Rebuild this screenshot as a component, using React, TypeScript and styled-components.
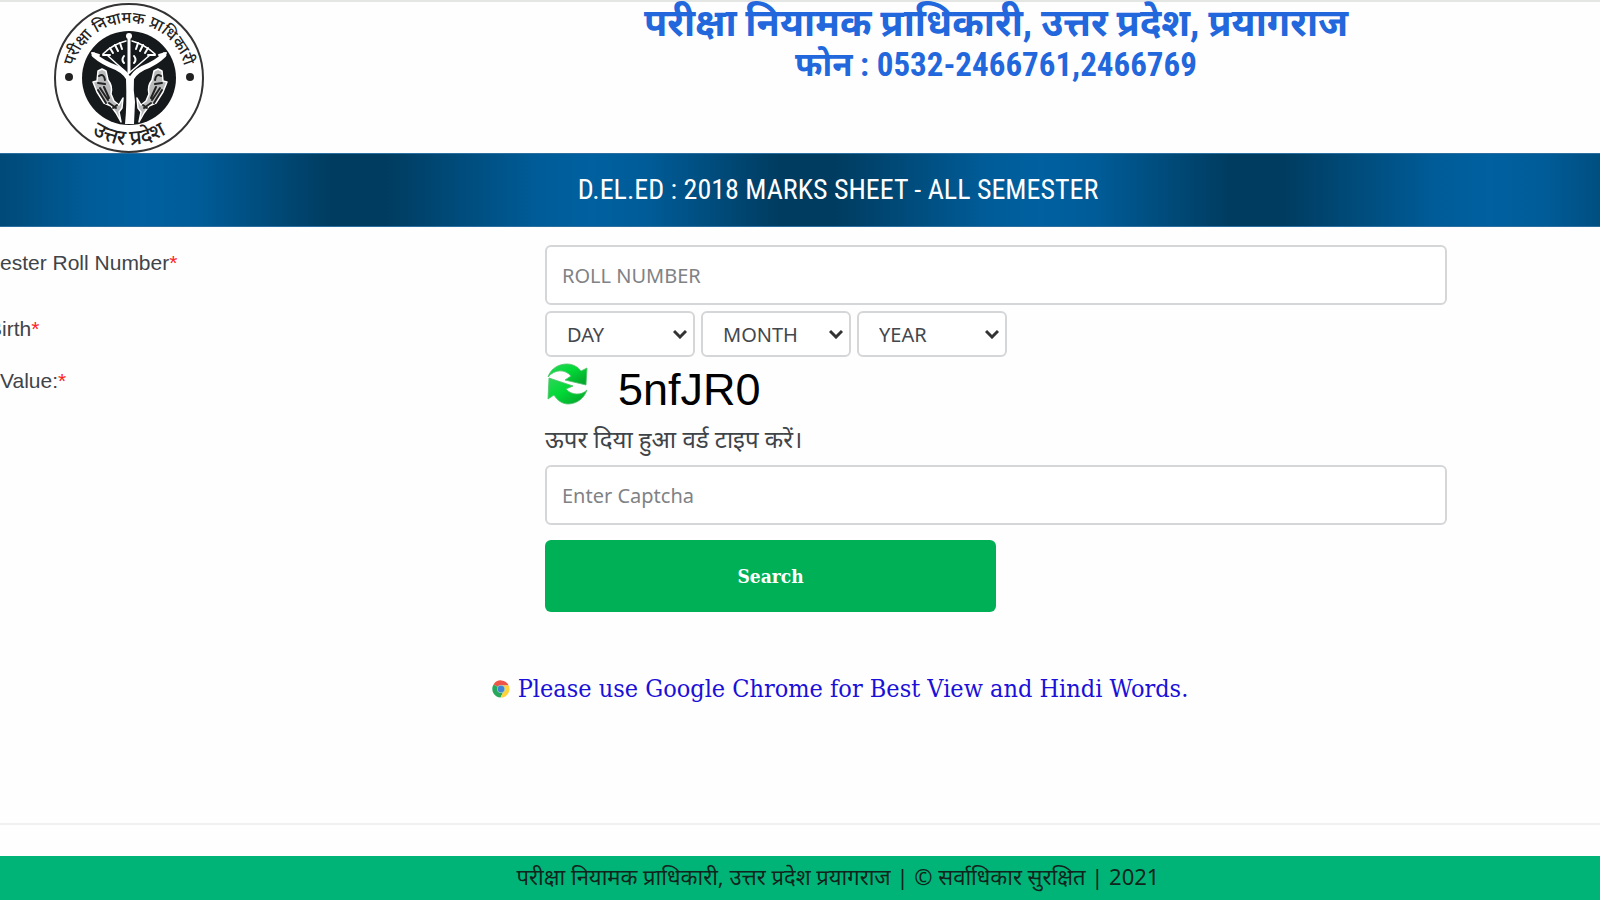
import React from "react";
import styled, { createGlobalStyle } from "styled-components";

const GlobalStyle = createGlobalStyle`
  * { box-sizing: border-box; }
  body {
    margin: 0;
    background: #fefefe;
    color: #3f4449;
    font-family: "Liberation Sans", Arial, sans-serif;
    overflow-x: hidden;
  }
`;

const columns = "545px minmax(0, 1fr) 153px";
const condensed = `"Roboto Condensed", Roboto, "Noto Sans", sans-serif`;

const Page = styled.div`
  min-height: 100vh;
  display: flex;
  flex-direction: column;
`;

const Header = styled.header`
  display: grid;
  grid-template-columns: ${columns};
  height: 153px;
  border-top: 2px solid #e4e6e4;
`;

const LogoCell = styled.div`
  padding-left: 53px;
`;

const Emblem = styled.svg`
  display: block;
  width: 152px;
  height: 152px;
`;

const Authority = styled.h1`
  margin: 0;
  color: #2267dc;
  font-family: ${condensed};
  font-size: 38px;
  font-weight: 700;
  line-height: 42px;
  text-align: center;
  white-space: nowrap;
`;

const Phone = styled.span`
  display: block;
  font-size: 33px;
`;

const Banner = styled.h2`
  display: flex;
  align-items: center;
  justify-content: center;
  height: 74px;
  margin: 0;
  padding-left: 76px;
  border: solid #2a6f9f;
  border-width: 1px 0;
  color: #fff;
  background: linear-gradient(90deg, #0060a0 0, #005c98 12%, #003c60 42%, #003c60 54%, #005c98 88%, #0060a0 100%) 143px 0 / 449px 100% repeat-x;
  font-family: ${condensed};
  font-size: 28px;
  font-weight: 400;
  line-height: 40px;
`;

const Form = styled.form`
  display: grid;
  grid-template-columns: ${columns};
  row-gap: 6px;
  padding-top: 18px;
`;

const Label = styled.label<{ $cut?: number }>`
  grid-column: 1;
  padding-top: 5px;
  font-size: 21px;
  line-height: 26px;
  text-indent: ${(p) => -(p.$cut ?? 0)}px;
`;

const Star = styled.span`
  color: #f22;
`;

const Field = styled.div`
  grid-column: 2;
`;

const TextInput = styled.input`
  display: block;
  width: 100%;
  height: 60px;
  padding: 0 15px;
  border: 2px solid #d5d6d8;
  border-radius: 6px;
  background: #fff;
  color: #3f4449;
  font-family: "Noto Sans", sans-serif;
  font-size: 20px;
  &::placeholder { color: #808285; opacity: 1; }
`;

const DateRow = styled.div`
  display: flex;
  gap: 6px;
`;

const SelectBox = styled.div`
  position: relative;
  width: 150px;
`;

const Select = styled.select`
  appearance: none;
  width: 100%;
  height: 46px;
  padding: 0 20px;
  border: 2px solid #d5d6d8;
  border-radius: 6px;
  background: #fff;
  color: #44484d;
  font-family: "Noto Sans", sans-serif;
  font-size: 20px;
`;

const Chevron = styled.svg`
  position: absolute;
  right: 8px;
  top: 18px;
  width: 14px;
  height: 10px;
  pointer-events: none;
`;

const CaptchaRow = styled.div`
  display: flex;
  gap: 29px;
  height: 59px;
`;

const Refresh = styled.button`
  width: 44px;
  height: 44px;
  padding: 0;
  border: 0;
  background: none;
  svg { display: block; width: 44px; height: 44px; }
`;

const CaptchaText = styled.output`
  color: #000;
  font-size: 45px;
  line-height: 54px;
`;

const Hint = styled.p`
  margin: 0;
  padding-bottom: 9px;
  font-family: "Noto Sans", sans-serif;
  font-size: 24px;
  line-height: 34px;
`;

const SearchButton = styled.button`
  display: block;
  width: 50%;
  height: 72px;
  margin-top: 15px;
  border: 0;
  border-radius: 6px;
  background: #00b056;
  color: #fff;
  font-family: "DejaVu Serif Condensed", "DejaVu Serif", serif;
  font-size: 19px;
  font-weight: 700;
`;

const Notice = styled.div`
  display: flex;
  justify-content: center;
  padding: 58px 0 0 80px;
`;

const NoticeLink = styled.a`
  display: flex;
  align-items: center;
  gap: 8px;
  color: #1a10d8;
  font-family: "DejaVu Serif Condensed", "DejaVu Serif", serif;
  font-size: 25px;
  line-height: 38px;
  text-decoration: none;
  svg { width: 18px; height: 18px; }
`;

const Footer = styled.footer`
  margin-top: auto;
  padding-top: 31px;
  border-top: 2px solid #f1f1f1;
`;

const FooterBar = styled.div`
  height: 44px;
  padding-left: 76px;
  background: #00b478;
  color: #10251c;
  font-family: "Noto Sans", sans-serif;
  font-size: 22px;
  line-height: 40px;
  text-align: center;
`;

const dateParts = ["DAY", "MONTH", "YEAR"];

function StateEmblem() {
  return (
    <Emblem viewBox="0 0 152 152" role="img" aria-label="उत्तर प्रदेश">
      <defs>
        <path id="upper" d="M19 78a57 57 0 0 1 114 0" />
        <path id="lower" d="M9 76a67 67 0 0 0 134 0" />
      </defs>
      <circle cx="76" cy="76" r="74" fill="#fff" stroke="#333" strokeWidth="2" />
      <circle cx="76" cy="76" r="47" fill="#15191b" />
      <g fill="#222" fontFamily="Noto Sans, sans-serif" fontWeight="500" textAnchor="middle">
        <text fontSize="16"><textPath href="#upper" startOffset="50%">परीक्षा नियामक प्राधिकारी</textPath></text>
        <text fontSize="21"><textPath href="#lower" startOffset="50%">उत्तर प्रदेश</textPath></text>
      </g>
      <circle cx="16" cy="75" r="4" fill="#222" />
      <circle cx="137" cy="75" r="4" fill="#222" />
      <g fill="none" stroke="#fff" strokeLinecap="round" strokeLinejoin="round">
        <path d="M76 36V70" strokeWidth="3" />
        <path d="M41 53Q50 61 64 66Q74 71 77 80Q80 71 90 66Q103 61 111 53" strokeWidth="5" />
        <path d="M39 51l7 2M113 51l-7 2" strokeWidth="2" />
        <path d="M54 53L75 72L97 53M73 39Q60 42 50 52M79 39Q91 42 102 52" strokeWidth="1.500" />
        <path d="M57 46l3 5M62 43l3 6M67 41l2 6M95 46l-3 5M90 43l-3 6M85 41l-2 6M50 53h7M102 53h-7M71 54q-3 4 0 7M81 54q3 4 0 7" strokeWidth="2" />
      </g>
      <path d="M73 76h8q-1 12 1 24l-1 22h-9q2-18 1-46z" fill="#fff" />
      <circle cx="76" cy="34" r="3" fill="#fff" />
      {[false, true].map((mirrored) => (
        <g key={String(mirrored)} transform={mirrored ? "matrix(-1 0 0 1 154 0)" : undefined} strokeLinecap="round" strokeLinejoin="round">
          <path d="M45 69l4-2 4 2 2 9q5 6 3 14l3 7 5 4 4-7-1 10-3 4 2 10-5-9-5-7-7-3-7-11-4-10 4-1z" fill="#b8babb" stroke="#fff" strokeWidth="1.500" />
          <path d="M46 74q5-3 6 4M45 81l7 1M47 86l8 12M51 85l5 11M45 88l8 13M56 101l7 5M64 103l-4 3" fill="none" stroke="#222" strokeWidth="2" />
        </g>
      ))}
    </Emblem>
  );
}

function RefreshIcon() {
  return (
    <svg viewBox="0 0 44 44" aria-hidden="true">
      <defs>
        <linearGradient id="leaf" x1="0" x2="1" y1="0" y2="1">
          <stop offset="0" stopColor="#2fd65a" />
          <stop offset="0.450" stopColor="#00d936" />
          <stop offset="1" stopColor="#079c2b" />
        </linearGradient>
      </defs>
      <g fill="url(#leaf)" stroke="#4fc46a" strokeWidth="0.800" strokeLinejoin="round">
        <path d="M3 14C6 5 14 1 22 1C28 1 33 4 36 8L42 5L41 22L20 17L26 13C20 6 10 6 3 14Z" />
        <path d="M4 15L28 23L21 26C26 32 36 33 42 27C39 36 31 41 23 41C17 41 12 37 9 32L3 36Z" />
      </g>
    </svg>
  );
}

function ChromeIcon() {
  return (
    <svg viewBox="0 0 18 18" aria-hidden="true">
      <path d="M9 9L1.600 4.500A8.500 8.500 0 0 1 16.700 5.500H9Z" fill="#ee5548" />
      <path d="M9 9L1.600 4.500A8.500 8.500 0 0 0 8.500 17.500L12 10.500Z" fill="#27a85a" />
      <path d="M9 5.500H16.700A8.500 8.500 0 0 1 8.500 17.500L12.500 10Z" fill="#ffd43b" />
      <circle cx="9" cy="9" r="4" fill="#9cc8c0" />
      <circle cx="9" cy="9" r="3.200" fill="#3f83d8" />
    </svg>
  );
}

export default function App() {
  return (
    <Page>
      <GlobalStyle />
      <Header>
        <LogoCell><StateEmblem /></LogoCell>
        <Authority>
          परीक्षा नियामक प्राधिकारी, उत्तर प्रदेश, प्रयागराज
          <Phone>फोन : 0532-2466761,2466769</Phone>
        </Authority>
      </Header>
      <Banner>D.EL.ED : 2018 MARKS SHEET - ALL SEMESTER</Banner>
      <Form onSubmit={(e) => e.preventDefault()}>
        <Label htmlFor="roll">ester Roll Number<Star>*</Star></Label>
        <Field><TextInput id="roll" placeholder="ROLL NUMBER" /></Field>
        <Label htmlFor="day" $cut={12}>Birth<Star>*</Star></Label>
        <Field>
          <DateRow>
            {dateParts.map((part) => (
              <SelectBox key={part}>
                <Select id={part.toLowerCase()} aria-label={part}><option>{part}</option></Select>
                <Chevron viewBox="0 0 14 10" aria-hidden="true">
                  <path d="M1 2l6 6 6-6" fill="none" stroke="#333" strokeWidth="3" />
                </Chevron>
              </SelectBox>
            ))}
          </DateRow>
        </Field>
        <Label htmlFor="captcha">Value:<Star>*</Star></Label>
        <Field>
          <CaptchaRow>
            <Refresh type="button" aria-label="Refresh"><RefreshIcon /></Refresh>
            <CaptchaText>5nfJR0</CaptchaText>
          </CaptchaRow>
          <Hint>ऊपर दिया हुआ वर्ड टाइप करें।</Hint>
          <TextInput id="captcha" placeholder="Enter Captcha" />
          <SearchButton type="submit">Search</SearchButton>
        </Field>
      </Form>
      <Notice>
        <NoticeLink href="#"><ChromeIcon />Please use Google Chrome for Best View and Hindi Words.</NoticeLink>
      </Notice>
      <Footer>
        <FooterBar>परीक्षा नियामक प्राधिकारी, उत्तर प्रदेश प्रयागराज | © सर्वाधिकार सुरक्षित | 2021</FooterBar>
      </Footer>
    </Page>
  );
}
